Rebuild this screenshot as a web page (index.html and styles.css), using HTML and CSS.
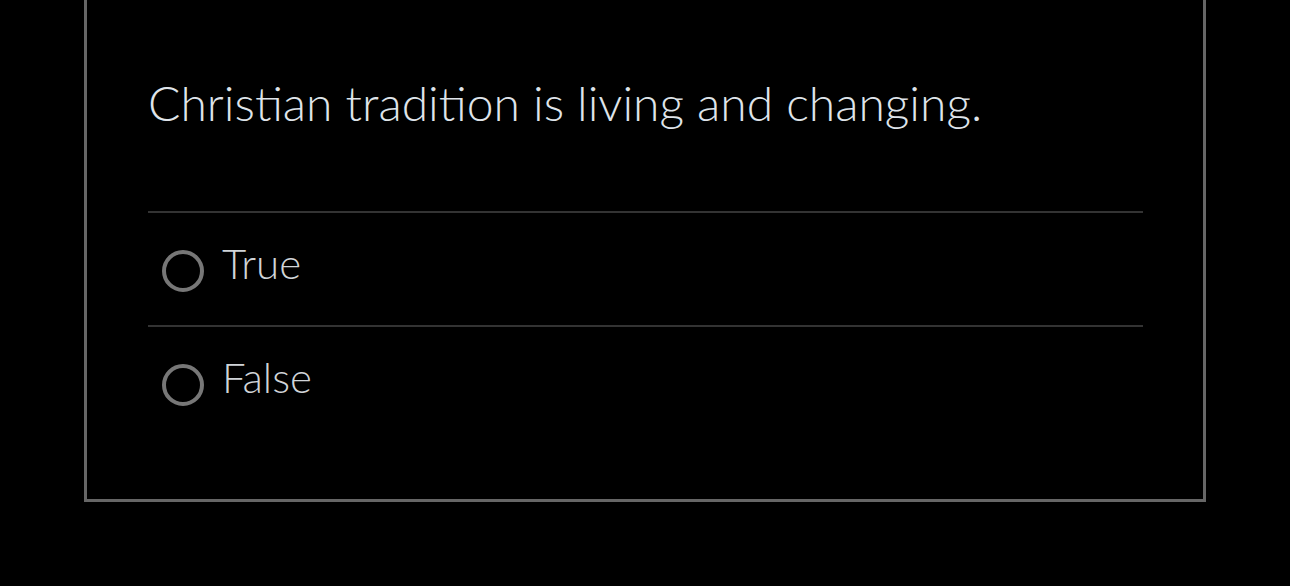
FILE: index.html
```html
<!DOCTYPE html>
<html>
<head>
<meta charset="utf-8">
<link rel="stylesheet" href="styles.css">
</head>
<body>
<div class="card">
  <div class="question">Christian tradition is living and changing.</div>
  <div class="answers">
    <label class="answer">
      <svg class="radio" width="42" height="42" viewBox="0 0 42 42"><circle cx="21" cy="21" r="19" fill="none" stroke="#777" stroke-width="4"/></svg>
      <span class="answer-text">True</span>
    </label>
    <label class="answer">
      <svg class="radio" width="42" height="42" viewBox="0 0 42 42"><circle cx="21" cy="21" r="19" fill="none" stroke="#777" stroke-width="4"/></svg>
      <span class="answer-text">False</span>
    </label>
  </div>
</div>
</body>
</html>
```
FILE: styles.css
```css
html, body {
  margin: 0;
  padding: 0;
  background: #000;
  height: 100%;
}
body {
  font-family: Lato, "Liberation Sans", sans-serif;
}
.card {
  box-sizing: border-box;
  margin-left: 84px;
  width: 1122px;
  border: 3px solid #666;
  border-top: none;
  padding: 75px 60px 60px 61px;
}
.question {
  color: #dfe4ea;
  font-size: 48px;
  font-weight: 300;
  line-height: 56px;
  margin-bottom: 80px;
}
.answers {
  display: flex;
  flex-direction: column;
}
.answer {
  display: flex;
  align-items: center;
  gap: 18px;
  height: 114px;
  border-top: 2px solid #333;
  padding-left: 14px;
  box-sizing: border-box;
}
.radio {
  flex: none;
  margin-top: 4px;
}
.answer-text {
  color: #d0d4d8;
  font-size: 42px;
  font-weight: 300;
  line-height: 50px;
  margin-top: -12px;
}
```
